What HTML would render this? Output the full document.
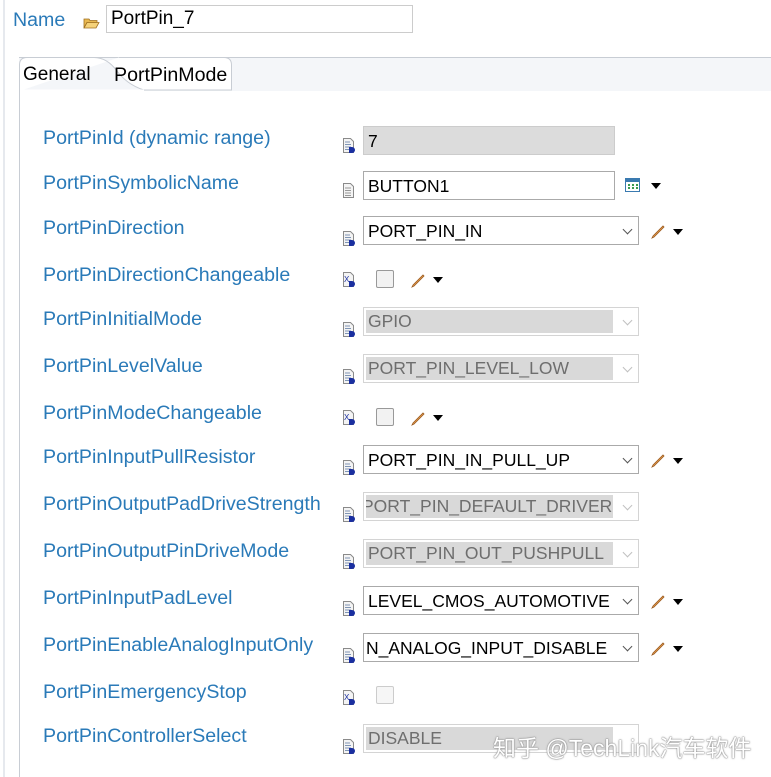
<!DOCTYPE html>
<html style="overflow:hidden"><head><meta charset="utf-8"><style>
html,body{margin:0;width:771px;height:777px;overflow:hidden;}
body{background:#fff;position:relative;font-family:"Liberation Sans","Noto Sans CJK SC",sans-serif;}
.a{position:absolute;}
.lbl{position:absolute;left:43px;font-size:19.6px;color:#2a7ab8;white-space:nowrap;}
.box{position:absolute;left:363px;width:274px;height:29px;border:1px solid #aaa;background:#fff;font-size:17.5px;line-height:29px;color:#000;overflow:hidden;white-space:nowrap;box-sizing:border-box;padding-left:4px;}
.dis{border-color:#d4d4d4;}
.dis .in{position:absolute;left:2px;top:2px;width:245px;height:23px;background:#d9d9d9;color:#6e6e6e;line-height:23px;padding-left:2px;overflow:hidden;}
.chev{position:absolute;right:7px;top:9px;width:6px;height:6px;border-right:1px solid #555;border-bottom:1px solid #555;transform:rotate(45deg);}
.dis .chev{border-color:#c0c0c0;}
.ic{position:absolute;left:342px;width:14px;height:16px;}
.cb{position:absolute;left:376px;width:18px;height:18px;border:1px solid #999;border-radius:2px;background:#f2f2f2;box-sizing:border-box;}
.pen{position:absolute;width:16px;height:16px;}
.tri{position:absolute;width:0;height:0;border-left:5px solid transparent;border-right:5px solid transparent;border-top:6px solid #000;}
</style></head><body>
<div class="a" style="left:3px;top:0;width:2px;height:777px;background:#e6e9ee"></div>
<div class="a" style="left:13px;top:9px;font-size:19.6px;color:#2a7ab8">Name</div>
<svg class="a" style="left:83px;top:17px" width="17" height="12"><path d="M1 2h5l1 1.5h7v2H4L1 11z" fill="#e8b850" stroke="#a07020" stroke-width="0.8"/><path d="M4 5.5h12l-3 5.5H1z" fill="#f5d27a" stroke="#a07020" stroke-width="0.8"/></svg>
<div class="a" style="left:106px;top:5px;width:307px;height:28px;border:1px solid #ccc;box-sizing:border-box;font-size:19px;line-height:26px;padding-left:4px">PortPin_7</div>
<div class="a" style="left:19px;top:89px;width:760px;height:720px;border-left:1px solid #c8cdd4;border-top:1px solid #c8cdd4;"></div>
<div class="a" style="left:19px;top:57px;width:760px;height:33px;border-top:1px solid #c8cdd4;background:#f4f6f9;"></div>
<svg class="a" style="left:19px;top:57px" width="216" height="34"><path d="M0.5 34V8Q0.5 0.5 8 0.5H75Q88 0.5 98 14T125 33H212.5V8Q212.5 0.5 205 0.5H100" fill="#fff" stroke="#c8cdd4"/><path d="M1 33.5H125" stroke="#fff" stroke-width="2"/></svg>
<div class="a" style="left:23px;top:64px;font-size:19px">General</div>
<div class="a" style="left:114px;top:64px;font-size:19.6px">PortPinMode</div>

<div class="lbl" style="top:127px">PortPinId (dynamic range)</div>
<div class="lbl" style="top:172px">PortPinSymbolicName</div>
<div class="lbl" style="top:217px">PortPinDirection</div>
<div class="lbl" style="top:264px">PortPinDirectionChangeable</div>
<div class="lbl" style="top:308px">PortPinInitialMode</div>
<div class="lbl" style="top:355px">PortPinLevelValue</div>
<div class="lbl" style="top:402px">PortPinModeChangeable</div>
<div class="lbl" style="top:446px">PortPinInputPullResistor</div>
<div class="lbl" style="top:493px">PortPinOutputPadDriveStrength</div>
<div class="lbl" style="top:540px">PortPinOutputPinDriveMode</div>
<div class="lbl" style="top:587px">PortPinInputPadLevel</div>
<div class="lbl" style="top:634px">PortPinEnableAnalogInputOnly</div>
<div class="lbl" style="top:681px">PortPinEmergencyStop</div>
<div class="lbl" style="top:725px">PortPinControllerSelect</div>

<svg width="0" height="0" style="position:absolute"><defs>
<g id="d"><path d="M1.5 .5h7l3 3v11h-10z" fill="#f4f4f4" stroke="#8a8a8a"/><path d="M3 4h5M3 6.5h6M3 9h6M3 11.5h4" stroke="#7f95b5"/><path d="M7 9h3a3 3 0 0 1 0 6h-3z" fill="#1a2fa0"/></g>
<g id="x"><path d="M1.5 .5h7l3 3v11h-10z" fill="#f4f4f4" stroke="#8a8a8a"/><text x="2" y="10" font-size="8" fill="#1a2fa0" font-family="Liberation Sans">X</text><path d="M7 9h3a3 3 0 0 1 0 6h-3z" fill="#1a2fa0"/></g>
<g id="p"><path d="M3 13l-1 2 2-1 10-10-1-1z" fill="#e8a050" stroke="#9a5a20" stroke-width="0.8"/></g>
</defs></svg>

<svg class="ic" style="top:138px" viewBox="0 0 14 16"><use href="#d"/></svg>
<div class="box" style="top:126px;width:252px;background:#dcdcdc;border-color:#ccc">7</div>
<svg class="ic" style="top:183px" viewBox="0 0 14 16"><path d="M1.5 .5h7l3 3v11h-10z" fill="#f4f4f4" stroke="#8a8a8a"/><path d="M3 5h6M3 7.5h6M3 10h6M3 12.5h6" stroke="#999"/></svg>
<div class="box" style="top:171px;width:252px">BUTTON1</div>
<svg class="a" style="left:625px;top:178px" width="15" height="14"><rect x=".5" y=".5" width="14" height="13" fill="#fff" stroke="#3a7ab0"/><rect x="1" y="1" width="13" height="3" fill="#3a7ab0"/><path d="M3 7h2M7 7h2M11 7h2M3 10h2M7 10h2M11 10h2" stroke="#3a9a50" stroke-width="2"/></svg>
<div class="tri" style="left:651px;top:183px"></div>
<svg class="ic" style="top:231px" viewBox="0 0 14 16"><use href="#d"/></svg>
<div class="box" style="top:216px;width:276px">PORT_PIN_IN<div class="chev"></div></div>
<svg class="pen" style="left:650px;top:223px"><use href="#p"/></svg><div class="tri" style="left:673px;top:229px"></div>
<svg class="ic" style="top:272px" viewBox="0 0 14 16"><use href="#x"/></svg>
<div class="cb" style="top:270px"></div>
<svg class="pen" style="left:410px;top:272px"><use href="#p"/></svg><div class="tri" style="left:433px;top:277px"></div>
<svg class="ic" style="top:322px" viewBox="0 0 14 16"><use href="#d"/></svg>
<div class="box dis" style="top:307px;width:276px"><div class="in">GPIO</div><div class="chev"></div></div>
<svg class="ic" style="top:369px" viewBox="0 0 14 16"><use href="#d"/></svg>
<div class="box dis" style="top:354px;width:276px"><div class="in">PORT_PIN_LEVEL_LOW</div><div class="chev"></div></div>
<svg class="ic" style="top:410px" viewBox="0 0 14 16"><use href="#x"/></svg>
<div class="cb" style="top:408px"></div>
<svg class="pen" style="left:410px;top:410px"><use href="#p"/></svg><div class="tri" style="left:433px;top:415px"></div>
<svg class="ic" style="top:460px" viewBox="0 0 14 16"><use href="#d"/></svg>
<div class="box" style="top:445px;width:276px">PORT_PIN_IN_PULL_UP<div class="chev"></div></div>
<svg class="pen" style="left:650px;top:452px"><use href="#p"/></svg><div class="tri" style="left:673px;top:458px"></div>
<svg class="ic" style="top:507px" viewBox="0 0 14 16"><use href="#d"/></svg>
<div class="box dis" style="top:492px;width:276px"><div class="in" style="text-indent:-6px">PORT_PIN_DEFAULT_DRIVER</div><div class="chev"></div></div>
<svg class="ic" style="top:554px" viewBox="0 0 14 16"><use href="#d"/></svg>
<div class="box dis" style="top:539px;width:276px"><div class="in">PORT_PIN_OUT_PUSHPULL</div><div class="chev"></div></div>
<svg class="ic" style="top:601px" viewBox="0 0 14 16"><use href="#d"/></svg>
<div class="box" style="top:586px;width:276px">LEVEL_CMOS_AUTOMOTIVE<div class="chev" style="background:#fff;box-shadow:0 0 0 6px #fff"></div></div>
<svg class="pen" style="left:650px;top:593px"><use href="#p"/></svg><div class="tri" style="left:673px;top:599px"></div>
<svg class="ic" style="top:648px" viewBox="0 0 14 16"><use href="#d"/></svg>
<div class="box" style="top:633px;width:276px;padding-left:2px">N_ANALOG_INPUT_DISABLE<div class="chev" style="background:#fff;box-shadow:0 0 0 6px #fff"></div></div>
<svg class="pen" style="left:650px;top:640px"><use href="#p"/></svg><div class="tri" style="left:673px;top:646px"></div>
<svg class="ic" style="top:690px" viewBox="0 0 14 16"><use href="#x"/></svg>
<div class="cb" style="top:686px;border-color:#ccc;background:#f6f6f6"></div>
<svg class="ic" style="top:739px" viewBox="0 0 14 16"><use href="#d"/></svg>
<div class="box dis" style="top:724px;width:276px"><div class="in">DISABLE</div></div>
<div class="a" style="left:493px;top:729px;font-size:23px;color:#fff;text-shadow:0 0 1px #888,0 0 1px #888,0 0 2px #999;white-space:nowrap">知乎 @TechLink汽车软件</div>
</body></html>
